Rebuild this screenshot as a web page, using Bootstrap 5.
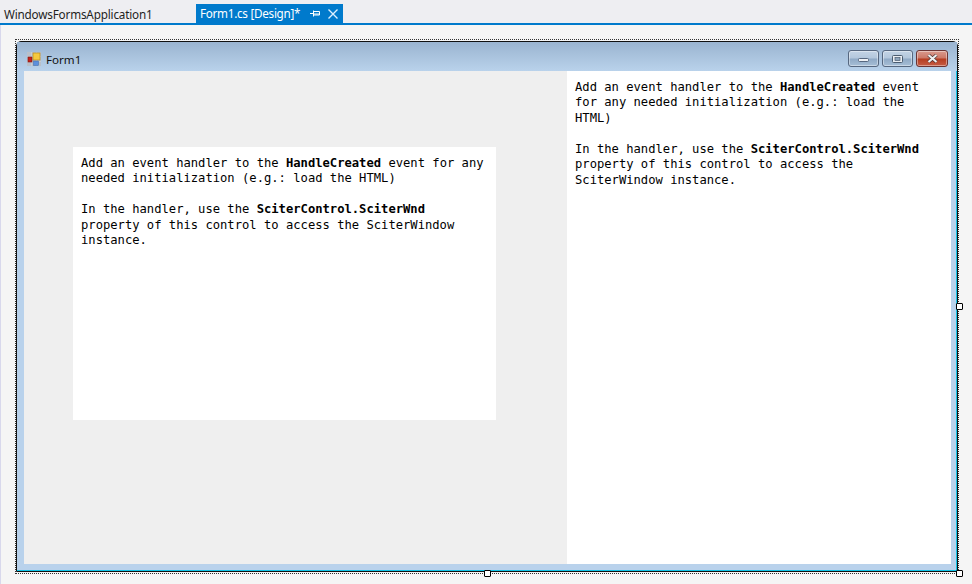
<!DOCTYPE html>
<html lang="en">
<head>
<meta charset="utf-8">
<title>Form1</title>
<link href="https://cdn.jsdelivr.net/npm/bootstrap@5.3.0/dist/css/bootstrap.min.css" rel="stylesheet">
<style>
html,body{width:972px;height:584px;overflow:hidden;margin:0;background:#f5f5f5}
.ide-tabs{height:25px;background:#eeeef2;border-bottom:2px solid #007acc;font:11.7px/1 "Noto Sans",sans-serif;color:#1e1e1e}
.proj-tab{width:196px;padding:9px 0 0 4px;letter-spacing:-.17px;white-space:nowrap}
.doc-tab{width:147px;height:19px;margin-top:4px;background:#007acc;color:#fff;padding:0 0 0 4px;letter-spacing:-.28px;white-space:nowrap}
.doc-tab svg{flex:none}
.pin-ico{margin-left:10px}
.close-ico{margin-left:8px}
.stage{height:559px;padding:14px 0 0 14px;border-left:1px solid #d8d8ec;background:#f5f5f5}
.sel-box{position:relative;width:944px;height:535px;border:1px dotted #333;padding:1px 0}
.win-frame{height:531px;background:#b9d2ec;border:1px solid #111;border-radius:5px 5px 0 0;box-shadow:inset -1px 0 0 #11c4e8}
.win-bottom{height:1px;background:#11c4e8}
.title-row{height:29px;background:linear-gradient(#9ab4d0,#b9d2eb);padding:4px 9px 0 10px;font:11.6px/1 "Noto Sans",sans-serif;color:#111}
.title-row .cap{margin-left:5px;padding-top:2px}
.win-btns{gap:3px}
.win-btn{width:31px;height:17px;border:1px solid #56677f;border-radius:3px;background:linear-gradient(#c3d3e5 0,#b3c7dc 48%,#8fa9c5 52%,#a6bed6 100%);box-shadow:inset 0 0 0 1px rgba(255,255,255,.4)}
.win-btn.cls{width:32px;border-color:#6b3434;background:linear-gradient(#d99a8e 0,#cc7766 48%,#b53c20 52%,#c65c45 100%)}
.client{height:493px;margin:0 6px 6px 7px;background:#efefef;font:12.17px/15.45px "DejaVu Sans Mono",monospace;color:#000}
.left-area{width:543px;padding:76px 0 0 49px}
.sciter-a{width:423px;height:273px;background:#fff;padding:9px 8px 8px}
.sciter-b{width:384px;background:#fff;padding:9px 8px 8px}
.sciter-a p,.sciter-b p{margin:0 0 15.45px}
.grip{position:absolute;width:7px;height:7px;background:#fff;border:1px solid #000;border-radius:1px}
.g-r{right:-5px;top:263px}
.g-b{left:468px;bottom:-4px}
.g-c{right:-5px;bottom:-4px}
</style>
</head>
<body>
<div class="ide-tabs d-flex">
  <div class="proj-tab">WindowsFormsApplication1</div>
  <div class="doc-tab d-flex align-items-center">
    <span>Form1.cs [Design]*</span>
    <svg class="pin-ico" width="10" height="9" viewBox="0 0 10 9" fill="none" stroke="#fff"><path d="M0 4.5H3M3.5 1.5v6M3.5 2.5H9.5V6H3.5M3.5 5H9.5"/></svg>
    <svg class="close-ico" width="10" height="10" viewBox="0 0 10 10" fill="none" stroke="#dcefff" stroke-width="1.4"><path d="M.5.5l9 9M9.5.5l-9 9"/></svg>
  </div>
</div>
<div class="stage">
  <div class="sel-box">
    <div class="win-frame d-flex flex-column">
      <div class="title-row d-flex align-items-center">
        <svg width="14" height="14" viewBox="0 0 14 14"><rect width="14" height="14" fill="#b9c0ca"/><path d="M0 4.5h14M0 9.5h14M4.5 0v14M9.5 0v14" stroke="#cfd3d9" stroke-width=".6"/><rect x="1" y="5" width="4" height="5" fill="#c8211a" stroke="#7a1410" stroke-width=".6"/><rect x="6" y="1" width="7" height="7" fill="#f5c93e" stroke="#b98a1c" stroke-width=".7"/><rect x="6.5" y="9" width="5" height="4.5" fill="#5c8fdc" stroke="#3b68ad" stroke-width=".5"/></svg>
        <span class="cap">Form1</span>
        <div class="win-btns ms-auto d-flex">
          <div class="win-btn d-flex align-items-end justify-content-center pb-1"><svg width="11" height="4" viewBox="0 0 11 4"><rect x=".5" y=".5" width="10" height="3" rx="1" fill="#eef1f5" stroke="#56677f"/></svg></div>
          <div class="win-btn d-flex align-items-center justify-content-center"><svg width="11" height="8" viewBox="0 0 11 8"><rect x=".5" y=".5" width="10" height="7" rx="1" fill="#e9edf2" stroke="#4b5c70"/><rect x="3" y="2.5" width="5" height="3" fill="#8ea5bd" stroke="#4b5c70" stroke-width=".7"/></svg></div>
          <div class="win-btn cls d-flex align-items-center justify-content-center"><svg width="13" height="9" viewBox="0 0 13 9"><path d="M2.5 1l8 7M10.5 1l-8 7" stroke="#4a3030" stroke-width="3.4"/><path d="M2.5 1l8 7M10.5 1l-8 7" stroke="#efefef" stroke-width="2.2"/></svg></div>
        </div>
      </div>
      <div class="client d-flex">
        <div class="left-area">
          <div class="sciter-a">
            <p>Add an event handler to the <b>HandleCreated</b> event for any needed initialization (e.g.: load the HTML)</p>
            <p>In the handler, use the <b>SciterControl.SciterWnd</b> property of this control to access the SciterWindow instance.</p>
          </div>
        </div>
        <div class="sciter-b ms-auto">
          <p>Add an event handler to the <b>HandleCreated</b> event for any needed initialization (e.g.: load the HTML)</p>
          <p>In the handler, use the <b>SciterControl.SciterWnd</b> property of this control to access the SciterWindow instance.</p>
        </div>
      </div>
      <div class="win-bottom"></div>
    </div>
    <span class="grip g-r"></span>
    <span class="grip g-b"></span>
    <span class="grip g-c"></span>
  </div>
</div>
<script src="https://cdn.jsdelivr.net/npm/bootstrap@5.3.0/dist/js/bootstrap.bundle.min.js"></script>
</body>
</html>
